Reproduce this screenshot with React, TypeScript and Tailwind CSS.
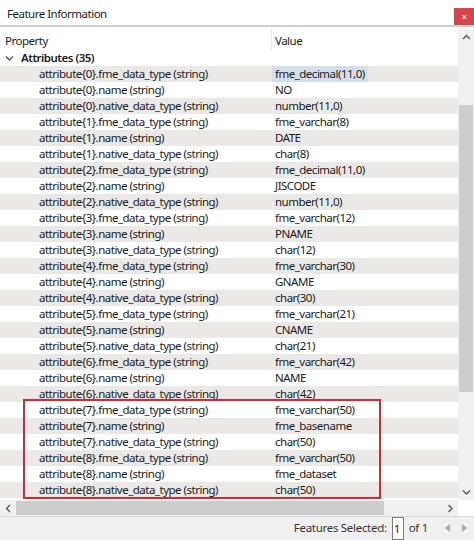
import React from "react"

type Row = { name: string; value: string }

const rows: Row[] = [
  { name: "attribute{0}.fme_data_type (string)", value: "fme_decimal(11,0)" },
  { name: "attribute{0}.name (string)", value: "NO" },
  { name: "attribute{0}.native_data_type (string)", value: "number(11,0)" },
  { name: "attribute{1}.fme_data_type (string)", value: "fme_varchar(8)" },
  { name: "attribute{1}.name (string)", value: "DATE" },
  { name: "attribute{1}.native_data_type (string)", value: "char(8)" },
  { name: "attribute{2}.fme_data_type (string)", value: "fme_decimal(11,0)" },
  { name: "attribute{2}.name (string)", value: "JISCODE" },
  { name: "attribute{2}.native_data_type (string)", value: "number(11,0)" },
  { name: "attribute{3}.fme_data_type (string)", value: "fme_varchar(12)" },
  { name: "attribute{3}.name (string)", value: "PNAME" },
  { name: "attribute{3}.native_data_type (string)", value: "char(12)" },
  { name: "attribute{4}.fme_data_type (string)", value: "fme_varchar(30)" },
  { name: "attribute{4}.name (string)", value: "GNAME" },
  { name: "attribute{4}.native_data_type (string)", value: "char(30)" },
  { name: "attribute{5}.fme_data_type (string)", value: "fme_varchar(21)" },
  { name: "attribute{5}.name (string)", value: "CNAME" },
  { name: "attribute{5}.native_data_type (string)", value: "char(21)" },
  { name: "attribute{6}.fme_data_type (string)", value: "fme_varchar(42)" },
  { name: "attribute{6}.name (string)", value: "NAME" },
  { name: "attribute{6}.native_data_type (string)", value: "char(42)" },
  { name: "attribute{7}.fme_data_type (string)", value: "fme_varchar(50)" },
  { name: "attribute{7}.name (string)", value: "fme_basename" },
  { name: "attribute{7}.native_data_type (string)", value: "char(50)" },
  { name: "attribute{8}.fme_data_type (string)", value: "fme_varchar(50)" },
  { name: "attribute{8}.name (string)", value: "fme_dataset" },
  { name: "attribute{8}.native_data_type (string)", value: "char(50)" },
]

function Arrow({ dir }: { dir: "up" | "down" | "left" | "right" }) {
  const pts = {
    up: "1,5 4.5,1.5 8,5",
    down: "1,1.5 4.5,5 8,1.5",
    left: "5,1 1.5,4.5 5,8",
    right: "1.5,1 5,4.5 1.5,8",
  }[dir]
  const wide = dir === "up" || dir === "down"
  return (
    <svg width={wide ? 9 : 7} height={wide ? 7 : 9} viewBox={wide ? "0 0 9 7" : "0 0 7 9"}>
      <polyline points={pts} fill="none" stroke="#555" strokeWidth="1.3" />
    </svg>
  )
}

export default function App() {
  return (
    <div className="w-[474px] h-[540px] bg-white flex flex-col overflow-hidden text-[11.5px] tracking-[-0.5px] text-[#1b1b1b] font-['Noto_Sans',sans-serif]">
      {/* title bar */}
      <div className="h-[27px] flex items-start justify-between border-b-2 border-[#cfcfcf] shrink-0">
        <div className="pl-[7px] pt-[5px]">Feature Information</div>
        <div className="mt-[8px] w-[20px] h-[17px] bg-[#d9434a] flex items-center justify-center text-white text-[10px] leading-none">
          ×
        </div>
      </div>

      <div className="flex h-[471px] mt-[2px] shrink-0">
        {/* table */}
        <div className="w-[458px] flex flex-col relative">
          <div className="h-[21px] flex shrink-0">
            <div className="w-[272px] pl-[5px] pt-[3px] border-r border-[#e6e6e6]">Property</div>
            <div className="pl-[3px] pt-[3px]">Value</div>
          </div>
          <div className="h-[16px] flex items-center shrink-0">
            <div className="w-[19px] pl-[5px] flex items-center">
              <Arrow dir="down" />
            </div>
            <span className="font-semibold pl-[2px]">Attributes (35)</span>
          </div>
          <div className="relative flex flex-col">
            {rows.map((r, i) => (
              <div key={i} className={`h-[16px] flex items-center ${i % 2 === 0 ? "bg-[#eae9e7]" : "bg-white"}`}>
                <div className="w-[272px] pl-[39px] whitespace-nowrap">{r.name}</div>
                <div className="h-full flex">
                  <span className={`h-full flex items-center px-[3px] whitespace-nowrap ${i === 0 ? "bg-[#d3e0ec]" : ""}`}>
                    {r.value}
                  </span>
                </div>
              </div>
            ))}
            <div className="absolute left-[23px] top-[333px] w-[358px] h-[100px] border-2 border-[#d42a35]" />
          </div>
        </div>

        {/* vertical scrollbar */}
        <div className="w-[16px] bg-[#f0f0f0] flex flex-col">
          <div className="h-[16px] flex items-center justify-center">
            <Arrow dir="up" />
          </div>
          <div className="flex-1 flex flex-col">
            <div className="mt-[60px] h-[287px] mx-[1px] bg-[#cdcdcd]" />
          </div>
          <div className="h-[16px] flex items-center justify-center">
            <Arrow dir="down" />
          </div>
        </div>
      </div>

      {/* horizontal scrollbar */}
      <div className="h-[16px] flex shrink-0">
        <div className="w-[458px] flex bg-[#f0f0f0]">
          <div className="w-[16px] flex items-center justify-center">
            <Arrow dir="left" />
          </div>
          <div className="w-[368px] my-[1px] bg-[#cdcdcd]" />
          <div className="flex-1" />
          <div className="w-[16px] flex items-center justify-center">
            <Arrow dir="right" />
          </div>
        </div>
        <div className="w-[16px] bg-white" />
      </div>

      {/* footer */}
      <div className="flex-1 bg-[#f0f0f0] border-t border-[#dadada] flex items-end justify-end pr-[7px] text-[#333] tracking-[-0.3px]">
        <span className="mb-[4px] mr-[5px]">Features Selected:</span>
        <div className="w-[12px] h-[23px] border border-[#7a7a7a] bg-white flex items-center pl-[1px] text-[#111]">1</div>
        <span className="mb-[4px] ml-[5px]">of 1</span>
        <div className="flex items-center gap-[12px] ml-[17px] mb-[8px]">
          <svg width="5" height="8" viewBox="0 0 5 8"><polygon points="5,0 0,4 5,8" fill="#a8a8a8" /></svg>
          <svg width="5" height="8" viewBox="0 0 5 8"><polygon points="0,0 5,4 0,8" fill="#a8a8a8" /></svg>
        </div>
      </div>
    </div>
  )
}
